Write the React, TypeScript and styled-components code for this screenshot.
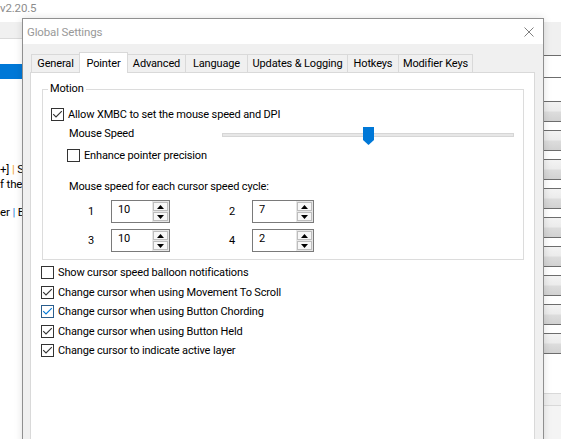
import React from "react";
import styled, { createGlobalStyle } from "styled-components";

const GlobalStyle = createGlobalStyle`
  html, body { margin: 0; padding: 0; background: #fff; }
  body {
    font-family: Roboto, "Noto Sans", sans-serif;
    font-size: 11px;
    letter-spacing: -0.15px;
    color: #000;
  }
`;

const Desktop = styled.div`
  position: relative;
  width: 561px;
  height: 439px;
  overflow: hidden;
  background: #fff;
`;

/* ---------- window behind the dialog ---------- */

const BackWindow = styled.div`
  display: flex;
  flex-direction: column;
  height: 100%;
`;

const BackTitle = styled.div`
  height: 22px;
  line-height: 16px;
  font-size: 11.5px;
  color: #8c8c8c;
  white-space: nowrap;
`;

const BackBand = styled.div`
  height: 16px;
  background: #f0f0f0;
`;

const BackBody = styled.div`
  flex: 1;
  display: grid;
  grid-template-columns: 300px 1fr;
`;

const LeftPane = styled.div`
  border-top: 1px solid #dadada;
  display: flex;
  flex-direction: column;
`;

const SelectedRow = styled.div`
  margin-top: 25px;
  height: 15px;
  background: #0078d7;
`;

const ListLine = styled.div<{ $gap: number }>`
  margin-top: ${(p) => p.$gap}px;
  height: 15px;
  line-height: 15px;
  font-size: 11.5px;
  white-space: nowrap;
`;

const Sep = styled.span<{ $color: string }>`
  color: ${(p) => p.$color};
`;

const RightPane = styled.div`
  display: flex;
  flex-direction: column;
`;

const PaneHeader = styled.div`
  height: 17px;
  background: #f0f0f0;
  border-bottom: 1px solid #6d6d6d;
`;

const PlainRow = styled.div<{ $h: number; $line?: boolean }>`
  height: ${(p) => p.$h}px;
  border-bottom: ${(p) => (p.$line ? "1px solid #6d6d6d" : "none")};
`;

const ButtonRow = styled.div`
  box-sizing: border-box;
  height: 21px;
  margin-bottom: 8px;
  border-top: 1px solid #6d6d6d;
  border-bottom: 1px solid #6d6d6d;
  background: linear-gradient(#f3f3f3 0%, #ececec 45%, #dcdcdc 55%, #d2d2d2 100%);
`;

const PaneFooter = styled.div`
  margin-top: 31px;
  height: 11px;
  background: #f0f0f0;
  border-top: 1px solid #d9d9d9;
  border-bottom: 1px solid #d9d9d9;
`;

const PaneRest = styled.div`
  flex: 1;
  background: #f4f4f4;
`;

/* ---------- dialog ---------- */

const Dialog = styled.div`
  position: absolute;
  left: 22px;
  top: 18px;
  width: 522px;
  height: 440px;
  box-sizing: border-box;
  border: 1px solid #8f8f8f;
  box-shadow: 0 0 8px rgba(0, 0, 0, 0.12);
  display: flex;
  flex-direction: column;
  background: #f0f0f0;
`;

const TitleBar = styled.div`
  height: 25px;
  background: #fff;
  display: flex;
  align-items: center;
  justify-content: space-between;
  padding: 0 9px 0 4px;
`;

const TitleText = styled.span`
  font-size: 11.5px;
  color: #999;
`;

const CloseIcon = () => (
  <svg width="10" height="10" viewBox="0 0 10 10">
    <path d="M0.5 0.5 L9.5 9.5 M9.5 0.5 L0.5 9.5" stroke="#808080" strokeWidth="1" />
  </svg>
);

const DialogBody = styled.div`
  flex: 1;
  display: flex;
  flex-direction: column;
  padding: 8px 8px 0 7px;
`;

const TabStrip = styled.div`
  display: flex;
  align-items: flex-end;
  height: 20px;
  padding-left: 1px;
`;

const Tab = styled.div<{ $w: number; $active?: boolean }>`
  box-sizing: border-box;
  width: ${(p) => p.$w}px;
  height: ${(p) => (p.$active ? 21 : 18)}px;
  margin-right: -1px;
  margin-bottom: ${(p) => (p.$active ? -1 : 0)}px;
  border: 1px solid #d9d9d9;
  border-bottom: none;
  background: ${(p) => (p.$active ? "#fff" : "#f0f0f0")};
  position: relative;
  z-index: ${(p) => (p.$active ? 2 : 1)};
  display: flex;
  align-items: center;
  justify-content: center;
  white-space: nowrap;
`;

const TabPage = styled.div`
  flex: 1;
  background: #fff;
  border: 1px solid #d9d9d9;
  padding: 8px 10px 0 11px;
`;

const GroupBox = styled.fieldset`
  margin: 0;
  padding: 0 0 7px 0;
  border: 1px solid #dcdcdc;
  min-width: 0;
`;

const Legend = styled.legend`
  margin-left: 5px;
  padding: 0 2px;
  height: 16px;
  line-height: 16px;
`;

const CheckRow = styled.div<{ $indent?: number; $top?: number; $h?: number }>`
  display: flex;
  align-items: center;
  gap: 4px;
  height: ${(p) => p.$h ?? 18}px;
  margin-top: ${(p) => p.$top ?? 0}px;
  padding-left: ${(p) => p.$indent ?? 0}px;
  white-space: nowrap;
`;

const Box = styled.span<{ $hot?: boolean }>`
  box-sizing: border-box;
  width: 13px;
  height: 13px;
  flex: none;
  border: 1px solid ${(p) => (p.$hot ? "#2b5d8c" : "#333")};
  background: #fff;
  display: flex;
`;

const CheckBox = ({ checked, hot }: { checked?: boolean; hot?: boolean }) => (
  <Box $hot={hot}>
    {checked && (
      <svg width="11" height="11" viewBox="0 0 11 11">
        <path
          d="M1.2 5.2 L4 8 L9.8 2.2"
          fill="none"
          stroke={hot ? "#0078d7" : "#333"}
          strokeWidth="1.1"
        />
      </svg>
    )}
  </Box>
);

const SpeedRow = styled.div`
  display: flex;
  height: 20px;
  margin-top: 1px;
  padding-left: 26px;
  margin-right: 9px;
`;

const SpeedLabel = styled.span`
  width: 153px;
  flex: none;
  line-height: 20px;
`;

const Slider = styled.div`
  position: relative;
  flex: 1;
`;

const Track = styled.div`
  box-sizing: border-box;
  margin-top: 9px;
  height: 4px;
  background: #e7e7e7;
  border: 1px solid #d6d6d6;
`;

const Thumb = styled.svg`
  position: absolute;
  top: 3px;
`;

const Caption = styled.div`
  margin-top: 15px;
  padding-left: 26px;
  height: 16px;
  line-height: 16px;
`;

const SpinGrid = styled.div`
  margin-top: 5px;
  padding-left: 45px;
  display: grid;
  grid-template-columns: 141px auto;
  row-gap: 6px;
`;

const SpinField = styled.div`
  display: flex;
  align-items: center;
`;

const SpinLabel = styled.span`
  width: 23px;
  flex: none;
`;

const SpinBox = styled.div<{ $w: number }>`
  box-sizing: border-box;
  width: ${(p) => p.$w}px;
  height: 23px;
  border: 1px solid #7a7a7a;
  background: #fff;
  display: flex;
`;

const SpinValue = styled.span`
  flex: 1;
  padding: 1px 0 0 6px;
  line-height: 16px;
`;

const SpinColumn = styled.div`
  width: 17px;
  box-sizing: border-box;
  padding: 1px;
  background: #e6e6e6;
  display: flex;
  flex-direction: column;
  gap: 1px;
`;

const SpinButton = styled.div`
  flex: 1;
  box-sizing: border-box;
  border: 1px solid #bdbdbd;
  background: #f7f7f7;
  display: flex;
  align-items: center;
  justify-content: center;
`;

const Arrow = ({ up }: { up?: boolean }) => (
  <svg width="7" height="4" viewBox="0 0 7 4">
    <polygon points={up ? "0,4 3.5,0 7,4" : "0,0 3.5,4 7,0"} fill="#000" />
  </svg>
);

const Spin = ({ label, value, width }: { label: string; value: string; width: number }) => (
  <SpinField>
    <SpinLabel>{label}</SpinLabel>
    <SpinBox $w={width}>
      <SpinValue>{value}</SpinValue>
      <SpinColumn>
        <SpinButton>
          <Arrow up />
        </SpinButton>
        <SpinButton>
          <Arrow />
        </SpinButton>
      </SpinColumn>
    </SpinBox>
  </SpinField>
);

const OptionList = styled.div`
  margin: 3px 0 0 -1px;
`;

const options = [
  { text: "Show cursor speed balloon notifications", checked: false },
  { text: "Change cursor when using Movement To Scroll", checked: true },
  { text: "Change cursor when using Button Chording", checked: true, hot: true },
  { text: "Change cursor when using Button Held", checked: true },
  { text: "Change cursor to indicate active layer", checked: true },
];

const tabs = [
  { name: "General", w: 49 },
  { name: "Pointer", w: 49, active: true },
  { name: "Advanced", w: 59 },
  { name: "Language", w: 63 },
  { name: "Updates & Logging", w: 101 },
  { name: "Hotkeys", w: 52 },
  { name: "Modifier Keys", w: 75 },
];

const sliderValue = 0.5;

export default function App() {
  return (
    <>
      <GlobalStyle />
      <Desktop>
        <BackWindow>
          <BackTitle>v2.20.5</BackTitle>
          <BackBand />
          <BackBody>
            <LeftPane>
              <SelectedRow />
              <ListLine $gap={83}>
                +] <Sep $color="#f0a030">|</Sep> Sticky Left Button
              </ListLine>
              <ListLine $gap={0}>f the window</ListLine>
              <ListLine $gap={13}>
                er <Sep $color="#2f86d8">|</Sep> Edge
              </ListLine>
            </LeftPane>
            <RightPane>
              <PaneHeader />
              <PlainRow $h={21} $line />
              <PlainRow $h={23} />
              {Array.from({ length: 9 }).map((_, i) => (
                <ButtonRow key={i} />
              ))}
              <PaneFooter />
              <PaneRest />
            </RightPane>
          </BackBody>
        </BackWindow>

        <Dialog>
          <TitleBar>
            <TitleText>Global Settings</TitleText>
            <CloseIcon />
          </TitleBar>
          <DialogBody>
            <TabStrip>
              {tabs.map((t) => (
                <Tab key={t.name} $w={t.w} $active={t.active}>
                  {t.name}
                </Tab>
              ))}
            </TabStrip>
            <TabPage>
              <GroupBox>
                <Legend>Motion</Legend>
                <CheckRow $indent={8} $top={8}>
                  <CheckBox checked />
                  Allow XMBC to set the mouse speed and DPI
                </CheckRow>
                <SpeedRow>
                  <SpeedLabel>Mouse Speed</SpeedLabel>
                  <Slider>
                    <Track />
                    <Thumb
                      width="11"
                      height="18"
                      viewBox="0 0 11 18"
                      style={{ left: `calc((100% - 11px) * ${sliderValue})` }}
                    >
                      <polygon points="0,0 11,0 11,13 5.5,18 0,13" fill="#0078d7" />
                    </Thumb>
                  </Slider>
                </SpeedRow>
                <CheckRow $indent={24} $top={2}>
                  <CheckBox />
                  Enhance pointer precision
                </CheckRow>
                <Caption>Mouse speed for each cursor speed cycle:</Caption>
                <SpinGrid>
                  <Spin label="1" value="10" width={59} />
                  <Spin label="2" value="7" width={62} />
                  <Spin label="3" value="10" width={59} />
                  <Spin label="4" value="2" width={62} />
                </SpinGrid>
              </GroupBox>
              <OptionList>
                {options.map((o) => (
                  <CheckRow key={o.text} $h={19.5}>
                    <CheckBox checked={o.checked} hot={o.hot} />
                    {o.text}
                  </CheckRow>
                ))}
              </OptionList>
            </TabPage>
          </DialogBody>
        </Dialog>
      </Desktop>
    </>
  );
}
